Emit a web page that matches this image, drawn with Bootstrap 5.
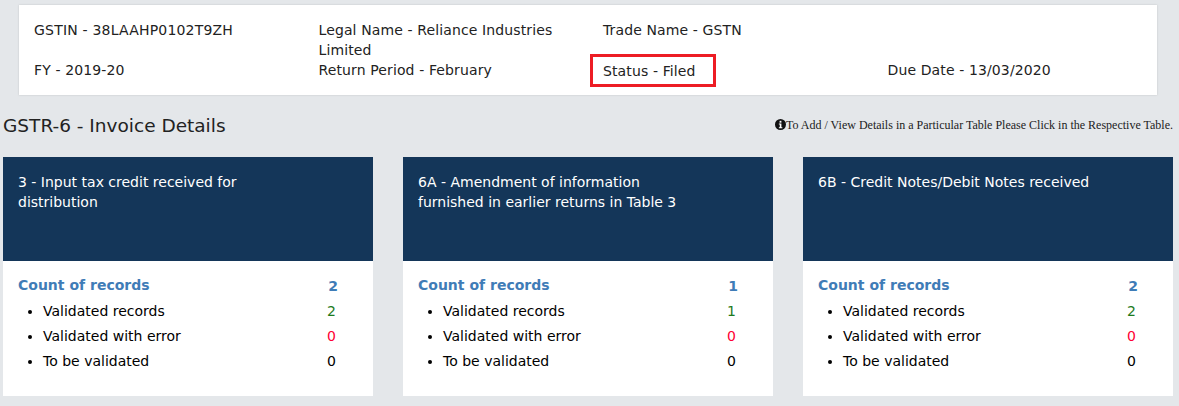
<!DOCTYPE html>
<html lang="en">
<head>
<meta charset="utf-8">
<title>GSTR-6 - Invoice Details</title>
<link rel="stylesheet" href="https://cdn.jsdelivr.net/npm/bootstrap@5.3.0/dist/css/bootstrap.min.css">
<style>
html,body{height:406px;overflow:hidden}
body{background:#e4e7ea;font-family:"DejaVu Sans",sans-serif;font-size:14px;line-height:20px;color:#222;padding:5px 6px 0 3px}
.info-panel{position:relative;background:#fff;margin:0 16px;padding:15px 0 15px;height:90px;box-shadow:0 0 2px rgba(0,0,0,.15);letter-spacing:.12px}
.info-grid{--bs-gutter-x:30px;margin:0}
.info-grid>div{padding:0 0 0 15px;width:284.5px;flex:none}
.gstin-txt{letter-spacing:.2px}
.red-box{position:absolute;left:571px;top:49px;width:126px;height:33px;border:3px solid #ed1c24}
.status-txt{position:relative;top:1px}
.title-row{height:62px;padding-top:20px}
.page-title{font-size:18.5px;line-height:22px;margin:0;font-weight:400;color:#222}
.help-note{font-family:"Liberation Serif",serif;font-size:12px;line-height:16px;color:#222;margin-top:2px}
.help-note svg{width:11px;height:11px;vertical-align:-1px}
.tiles{--bs-gutter-x:30px}
.tile-head{background:#143659;color:#fff;height:104px;padding:15px 15px 0}
.tile-body{background:#fff;height:135px;padding:14px 37px 0 15px;color:#000}
.count-line{font-weight:700;color:#3f7cb7;line-height:20px;height:24px}
.count-line .cnt{font-size:14px;position:relative;top:1px;margin-right:-2px}
.rec-list{padding:0 0 0 25px;margin:0}
.rec-list li{height:25px;line-height:25px;position:relative}
.rec-list li span.n{position:absolute;right:0;top:0}
.ok{color:#1d7a1d}.bad{color:#ff0033}
</style>
</head>
<body>
<div class="info-panel">
  <div class="row info-grid">
    <div><span class="gstin-txt">GSTIN - 38LAAHP0102T9ZH</span></div>
    <div>Legal Name - Reliance Industries Limited</div>
    <div>Trade Name - GSTN</div>
    <div></div>
    <div>FY - 2019-20</div>
    <div>Return Period - February</div>
    <div><span class="status-txt">Status - Filed</span></div>
    <div>Due Date - 13/03/2020</div>
  </div>
  <div class="red-box"></div>
</div>
<div class="d-flex justify-content-between title-row">
  <h4 class="page-title">GSTR-6 - Invoice Details</h4>
  <div class="help-note"><svg viewBox="0 0 12 12" aria-hidden="true"><circle cx="6" cy="6" r="6" fill="#111"/><rect x="5" y="2" width="2" height="2" fill="#fff"/><path d="M4.2 5h2.8v4h1v1H4.2V9h1V6h-1z" fill="#fff"/></svg>To Add / View Details in a Particular Table Please Click in the Respective Table.</div>
</div>
<div class="row tiles">
  <div class="col-4">
    <div class="tile-head">3 - Input tax credit received for<br>distribution</div>
    <div class="tile-body">
      <div class="count-line d-flex justify-content-between"><span>Count of records</span><span class="cnt">2</span></div>
      <ul class="rec-list">
        <li>Validated records<span class="n ok">2</span></li>
        <li>Validated with error<span class="n bad">0</span></li>
        <li>To be validated<span class="n">0</span></li>
      </ul>
    </div>
  </div>
  <div class="col-4">
    <div class="tile-head">6A - Amendment of information<br>furnished in earlier returns in Table 3</div>
    <div class="tile-body">
      <div class="count-line d-flex justify-content-between"><span>Count of records</span><span class="cnt">1</span></div>
      <ul class="rec-list">
        <li>Validated records<span class="n ok">1</span></li>
        <li>Validated with error<span class="n bad">0</span></li>
        <li>To be validated<span class="n">0</span></li>
      </ul>
    </div>
  </div>
  <div class="col-4">
    <div class="tile-head">6B - Credit Notes/Debit Notes received</div>
    <div class="tile-body">
      <div class="count-line d-flex justify-content-between"><span>Count of records</span><span class="cnt">2</span></div>
      <ul class="rec-list">
        <li>Validated records<span class="n ok">2</span></li>
        <li>Validated with error<span class="n bad">0</span></li>
        <li>To be validated<span class="n">0</span></li>
      </ul>
    </div>
  </div>
</div>
<script src="https://cdn.jsdelivr.net/npm/bootstrap@5.3.0/dist/js/bootstrap.bundle.min.js"></script>
</body>
</html>
